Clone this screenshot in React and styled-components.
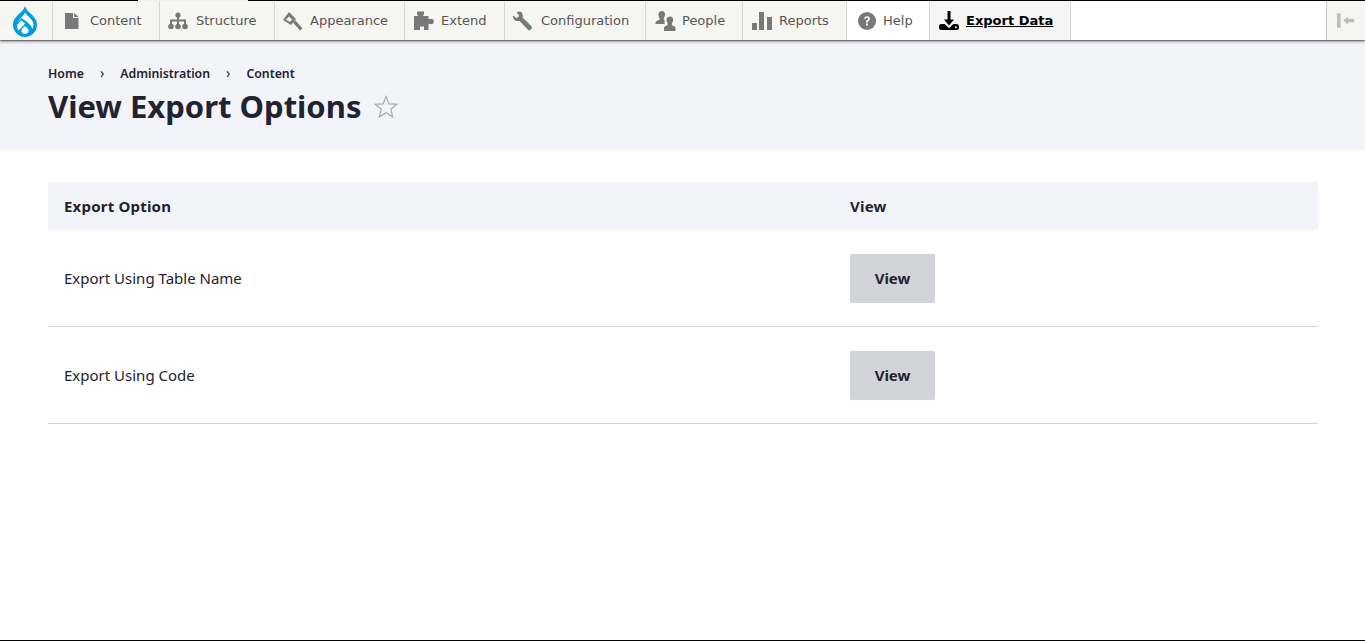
import React from "react";
import styled, { createGlobalStyle } from "styled-components";

const GlobalStyle = createGlobalStyle`
  html, body {
    margin: 0;
    padding: 0;
    background: #fff;
  }
  body {
    font-family: "Noto Sans", "Open Sans", sans-serif;
    color: #222330;
  }
`;

const Page = styled.div`
  min-height: 100vh;
  box-sizing: border-box;
  border-bottom: 1px solid #000;
  display: flex;
  flex-direction: column;
`;

const Toolbar = styled.nav`
  position: relative;
  display: flex;
  height: 40px;
  box-sizing: border-box;
  border-top: 1px solid #000;
  background: #fff;
  box-shadow: 0 1px 3px rgba(0, 0, 0, 0.6), 0 1px 1px rgba(0, 0, 0, 0.25);
  font-family: "DejaVu Sans", sans-serif;
  font-size: 13px;
  z-index: 1;
`;

const TopGap = styled.span`
  position: absolute;
  top: -1px;
  left: 138px;
  width: 110px;
  height: 1px;
  background: #f1f1ec;
`;

const Tab = styled.a`
  width: ${(p) => p.$width}px;
  box-sizing: border-box;
  display: flex;
  align-items: center;
  padding-left: ${(p) => p.$pad || 12}px;
  border-right: 1px solid #d8d8d3;
  background: ${(p) => (p.$white ? "#fff" : p.$active ? "#f5f5f5" : "#f5f5f2")};
  color: ${(p) => (p.$active ? "#000" : "#565656")};
  font-weight: ${(p) => (p.$active ? 700 : 400)};
  text-decoration: ${(p) => (p.$active ? "underline" : "none")};
  white-space: nowrap;
`;

const IconBox = styled.span`
  width: ${(p) => p.$width || 25}px;
  flex: none;
  display: flex;
  align-items: center;
  justify-content: flex-start;
`;

const Spacer = styled.div`
  flex: 1;
`;

const Collapse = styled.div`
  width: 39px;
  box-sizing: border-box;
  border-left: 1px solid #c9c9c9;
  background: #f5f5f2;
  display: flex;
  align-items: center;
  justify-content: center;
`;

const Banner = styled.header`
  height: 110px;
  box-sizing: border-box;
  background: #f3f4f9;
  padding: 24px 48px 0;
`;

const Crumbs = styled.ol`
  list-style: none;
  margin: 0;
  padding: 0;
  display: flex;
  align-items: center;
  font-size: 12.3px;
  line-height: 18px;
  font-weight: 600;
  color: #222330;
`;

const Crumb = styled.li`
  &:not(:last-child)::after {
    content: "›";
    font-size: 14px;
    font-weight: 400;
    margin: 0 16px;
  }
`;

const TitleRow = styled.div`
  display: flex;
  align-items: center;
  gap: 13px;
  margin-top: 2px;
`;

const Title = styled.h1`
  margin: 0;
  font-size: 31px;
  line-height: 42px;
  font-weight: 700;
  color: #222330;
`;

const Main = styled.main`
  padding: 32px 47px 0 48px;
`;

const Table = styled.table`
  width: 100%;
  border-collapse: collapse;
  table-layout: fixed;
  font-size: 15px;
  color: #222330;
`;

const HeadCell = styled.th`
  height: 48px;
  padding: 0 16px;
  background: #f3f4f9;
  text-align: left;
  font-weight: 700;
  letter-spacing: 0.2px;
  width: ${(p) => p.$width || "auto"};
`;

const Row = styled.tr`
  border-bottom: 1px solid #d3d4d9;
`;

const Cell = styled.td`
  height: 96px;
  padding: 0 16px;
`;

const Button = styled.button`
  width: 85px;
  height: 49px;
  display: block;
  border: 0;
  border-radius: 2px;
  background: #d3d4d9;
  box-shadow: 0 0 1px rgba(0, 0, 0, 0.15);
  color: #222330;
  font-family: inherit;
  font-size: 15px;
  font-weight: 700;
  cursor: pointer;
`;

const LogoSvg = styled.svg`
  margin-top: 2px;
`;

const FileIcon = () => (
  <svg width="14" height="16" viewBox="0 0 14 16" fill="#787878">
    <path d="M0 0h8v5h5.500v11H0z" />
    <path d="M9.200 0l4.300 4h-4.300z" />
  </svg>
);

const StructureIcon = () => (
  <svg width="20" height="18" viewBox="0 0 20 18" fill="#787878">
    <circle cx="10" cy="3" r="2.600" />
    <circle cx="3" cy="14.500" r="2.800" />
    <circle cx="10" cy="14.500" r="2.800" />
    <circle cx="17" cy="14.500" r="2.800" />
    <path d="M9 4h2v3.500h7V13h-2V9.500h-5V13H9V9.500H4V13H2V7.500h7z" />
  </svg>
);

const HammerIcon = () => (
  <svg width="20" height="20" viewBox="0 0 20 20" fill="#787878">
    <path d="M6 1L13 8 8 14 0 9z" />
    <path d="M2.800 8.800L6 5.500 9 8.500 7 11z" fill="#f5f5f2" />
    <path d="M10 11.500L12.500 9.500 19.500 17.500 17 19.500z" />
  </svg>
);

const PuzzleIcon = () => (
  <svg width="21" height="19" viewBox="0 0 21 19" fill="#787878">
    <path d="M4 0.500h7v2.500l-1 2h5.500v14H11v-3.500H7V19H1V5h4L4 3z" />
    <path d="M15 8h2.500v5H15z" />
    <circle cx="18" cy="10.500" r="2.800" />
  </svg>
);

const WrenchIcon = () => (
  <svg width="20" height="20" viewBox="0 0 20 20" fill="#787878">
    <path d="M1 4.500L4.700 7.200 7.200 5 4.800 1.200C7.500-.4 10.600 1.200 10.800 4.400 10.900 5.300 10.700 6 10.500 6.600L19.500 15.300C20.200 16 20.200 17 19.500 17.800L18.500 18.800C17.800 19.500 16.700 19.500 16 18.700L7.400 9.800C4.200 11 .4 8.500 1 4.500Z" />
  </svg>
);

const PeopleIcon = () => (
  <svg width="21" height="20" viewBox="0 0 21 20" fill="#787878">
    <path d="M7 0c1.900 0 3 1.500 3 3.300 0 1.300-.5 2.700-1.200 3.500v2.200l1 .5c-.5 1.500-.5 2.500 0 3.500H.5v-1.500c0-1.400 2.200-2 4-2.800V6.800C3.800 6 3.500 4.600 3.500 3.300 3.500 1.500 5.100 0 7 0z" />
    <path d="M15 5.500c2 0 3.200 1.500 3.200 3.300 0 1.300-.6 2.700-1.300 3.500v2c1.800.8 3.600 1.200 3.600 2.700v3H9v-3c0-1.500 1.800-1.900 3.600-2.700v-2c-.7-.8-1.100-2.200-1.100-3.500 0-1.800 1.500-3.300 3.500-3.300z" />
  </svg>
);

const BarsIcon = () => (
  <svg width="20" height="18" viewBox="0 0 20 18" fill="#787878">
    <rect x="0" y="11" width="5" height="7" />
    <rect x="7" y="0" width="5" height="18" />
    <rect x="15" y="5" width="5" height="13" />
  </svg>
);

const HelpIcon = () => (
  <svg width="18" height="18" viewBox="0 0 18 18">
    <circle cx="9" cy="9" r="9" fill="#787878" />
    <path
      d="M6 6.800C6 5.200 7.300 4.200 9 4.200s3 1 3 2.500c0 2.100-2.300 2.100-2.300 3.800H8c0-2.700 2-2.600 2-3.800 0-.6-.4-1-1-1-.7 0-1 .5-1.100 1.100z"
      fill="#fff"
    />
    <rect x="8" y="11.500" width="1.900" height="2" fill="#fff" />
  </svg>
);

const ExportIcon = () => (
  <svg width="20" height="20" viewBox="0 0 20 20" fill="#000">
    <path d="M8.500 0h3v8.500H15l-5 6-5-6h3.500z" />
    <path d="M2.500 13h3.200L10 17.300 14.300 13h3.200A2.500 2.500 0 0 1 20 15.500v1A2.500 2.500 0 0 1 17.500 19h-15A2.500 2.500 0 0 1 0 16.500v-1A2.500 2.500 0 0 1 2.500 13z" />
    <circle cx="16.800" cy="16.200" r="1" fill="#fff" />
  </svg>
);

const DropLogo = () => (
  <LogoSvg width="24" height="31" viewBox="0 0 24 31">
    <path
      d="M12 0c1 3.500 3.500 5.600 6 8 3 2.900 6 6 6 10.800C24 25.500 18.700 31 12 31S0 25.500 0 18.800C0 14 3 10.900 6 8c2.500-2.400 5-4.500 6-8z"
      fill="#009cde"
    />
    <path
      d="M12 6.500c1.200 2 3 3.500 4.500 5 2.500 2.500 4 4.500 4 7.500 0 1.500-.3 2.700-.9 3.800-1.500-3.300-4-5.500-6.500-7.500L8.500 12 5 16.200c.6-1.500 1.800-2.900 3-4.200 1.500-1.500 3-3.500 4-5.500z"
      fill="#fff"
    />
    <path
      d="M4.300 18.500L8.300 14.500 12 17.500 8.500 21.500 5.500 24.500C4.600 23 3.800 21 4.300 18.500z"
      fill="#fff"
    />
    <path
      d="M12 20c1.800 1.500 3.600 3 3.600 4.800 0 2-1.600 3.200-3.600 3.200s-3.600-1.200-3.600-3.200c0-1.800 1.800-3.300 3.600-4.800z"
      fill="#fff"
    />
  </LogoSvg>
);

const CollapseIcon = () => (
  <svg width="18" height="15" viewBox="0 0 20 16" fill="#bdbdbd">
    <rect x="0" y="0" width="4" height="16" />
    <path d="M7 8l5-4.500V6h7v4h-7v2.500z" />
  </svg>
);

const Star = () => (
  <svg width="24" height="23" viewBox="0 0 24 23" fill="none" stroke="#a5a6ad" strokeWidth="1.100">
    <path d="M12 1.500l2.900 7.400 8 .4-6.200 5 2.100 7.700L12 17.700l-6.800 4.300 2.100-7.700-6.200-5 8-.4z" />
  </svg>
);

const tabs = [
  { label: "Content", width: 107, icon: <FileIcon />, box: 25 },
  { label: "Structure", width: 115, icon: <StructureIcon />, box: 28, pad: 8 },
  { label: "Appearance", width: 130, icon: <HammerIcon />, box: 27, pad: 8 },
  { label: "Extend", width: 100, icon: <PuzzleIcon />, box: 28, pad: 8 },
  { label: "Configuration", width: 141, icon: <WrenchIcon />, box: 29, pad: 7 },
  { label: "People", width: 97, icon: <PeopleIcon />, box: 27, pad: 9 },
  { label: "Reports", width: 104, icon: <BarsIcon />, box: 27, pad: 9 },
  { label: "Help", width: 83, icon: <HelpIcon />, box: 25, pad: 11, white: true },
];

const rows = ["Export Using Table Name", "Export Using Code"];

const App = () => {
  return (
    <Page>
      <GlobalStyle />
      <Toolbar>
        <TopGap />
        <Tab $width={53} $pad={13}>
          <DropLogo />
        </Tab>
        {tabs.map((tab) => (
          <Tab key={tab.label} $width={tab.width} $pad={tab.pad} $white={tab.white}>
            <IconBox $width={tab.box}>{tab.icon}</IconBox>
            {tab.label}
          </Tab>
        ))}
        <Tab $width={141} $pad={9} $active>
          <IconBox $width={27}>
            <ExportIcon />
          </IconBox>
          Export Data
        </Tab>
        <Spacer />
        <Collapse>
          <CollapseIcon />
        </Collapse>
      </Toolbar>
      <Banner>
        <Crumbs>
          <Crumb>Home</Crumb>
          <Crumb>Administration</Crumb>
          <Crumb>Content</Crumb>
        </Crumbs>
        <TitleRow>
          <Title>View Export Options</Title>
          <Star />
        </TitleRow>
      </Banner>
      <Main>
        <Table>
          <thead>
            <tr>
              <HeadCell $width="754px">Export Option</HeadCell>
              <HeadCell>View</HeadCell>
            </tr>
          </thead>
          <tbody>
            {rows.map((row) => (
              <Row key={row}>
                <Cell>{row}</Cell>
                <Cell>
                  <Button>View</Button>
                </Cell>
              </Row>
            ))}
          </tbody>
        </Table>
      </Main>
    </Page>
  );
};

export default App;
